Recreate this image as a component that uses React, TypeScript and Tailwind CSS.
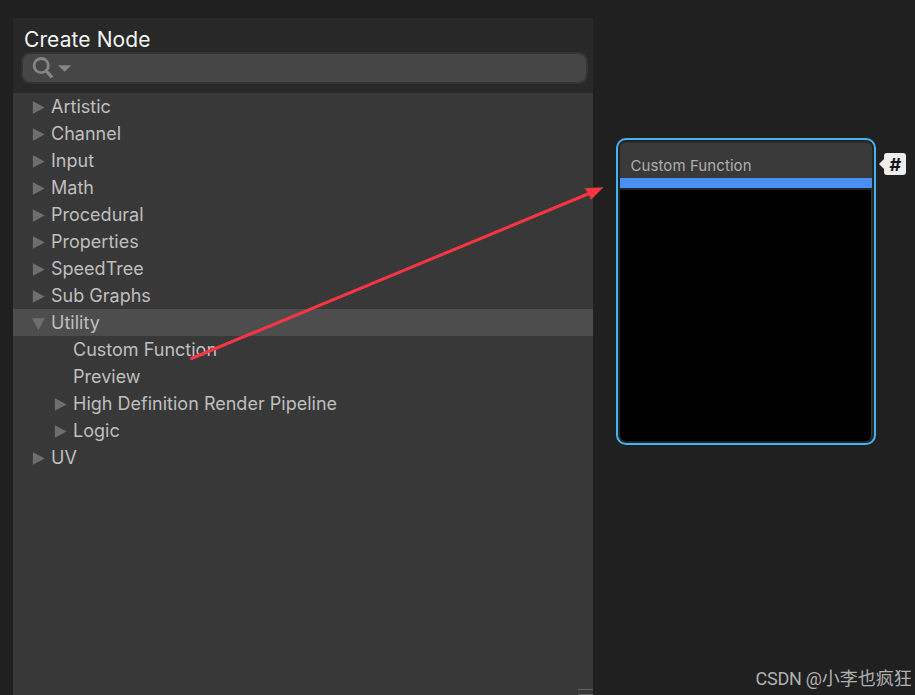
import clsx from "clsx";

interface TreeItem {
  label: string;
  depth: number;
  state: "open" | "closed" | "leaf";
}

const TREE_ITEMS: TreeItem[] = [
  { label: "Artistic", depth: 0, state: "closed" },
  { label: "Channel", depth: 0, state: "closed" },
  { label: "Input", depth: 0, state: "closed" },
  { label: "Math", depth: 0, state: "closed" },
  { label: "Procedural", depth: 0, state: "closed" },
  { label: "Properties", depth: 0, state: "closed" },
  { label: "SpeedTree", depth: 0, state: "closed" },
  { label: "Sub Graphs", depth: 0, state: "closed" },
  { label: "Utility", depth: 0, state: "open" },
  { label: "Custom Function", depth: 1, state: "leaf" },
  { label: "Preview", depth: 1, state: "leaf" },
  { label: "High Definition Render Pipeline", depth: 1, state: "closed" },
  { label: "Logic", depth: 1, state: "closed" },
  { label: "UV", depth: 0, state: "closed" },
];

function Foldout({ state }: { state: TreeItem["state"] }) {
  return (
    <svg className="h-[27px] w-[19px] shrink-0" viewBox="0 0 19 27" fill="#6e6e6e" aria-hidden="true">
      {state === "closed" && <path d="M.9 8.2 12.7 14.5.9 20.8Z" />}
      {state === "open" && <path d="M0 9.2h12.9L6.4 20.9Z" />}
    </svg>
  );
}

function TreeRow({ item }: { item: TreeItem }) {
  return (
    <li
      className={clsx(
        "flex h-[27px]",
        item.depth === 0 ? "pl-[19px]" : "pl-[41px]",
        item.state === "open" && "bg-[#4d4d4d]",
      )}
    >
      <Foldout state={item.state} />
      <span className="text-[18px] leading-[27px] tracking-[0.01px] whitespace-nowrap text-[#bfbfbf]">
        {item.label}
      </span>
    </li>
  );
}

function SearchField() {
  return (
    <div className="mr-[5px] ml-[8px] flex h-[32px] items-center rounded-[9px] border-2 border-[#343434] bg-[#464646]">
      <svg className="h-[28px] w-[52px]" viewBox="0 0 52 28" fill="none" aria-hidden="true">
        <circle cx="18.2" cy="11.6" r="7.1" stroke="#858585" strokeWidth="2.8" />
        <path d="m23.1 16.9 6 6.5" stroke="#858585" strokeWidth="3.2" />
        <path d="M35 11.2h13.2l-6.6 6.6Z" fill="#858585" />
      </svg>
    </div>
  );
}

/** Searchable list of node categories. */
function CreateNodePanel() {
  return (
    <section className="mt-[18px] ml-[13px] flex w-[580px] flex-col bg-[#282828]">
      <h1 className="h-[34px] pt-[7px] pl-[11px] text-[21px] leading-[29px] tracking-[0.1px] text-[#f4f4f4]">
        Create Node
      </h1>
      <SearchField />
      <ul className="mt-[9px] flex-1 bg-[#383838]">
        {TREE_ITEMS.map((item) => (
          <TreeRow key={item.label} item={item} />
        ))}
      </ul>
      <div className="flex justify-end bg-[#383838]">
        <div className="h-[6px] w-[15px] border-y border-[#646464]" />
      </div>
    </section>
  );
}

function NodeCard() {
  return (
    <div className="absolute top-[138px] left-[616px] flex h-[307px] w-[260px] flex-col overflow-hidden rounded-[10px] border-2 border-[#44b4ee] bg-[#242424] p-[2px]">
      <div className="h-[36px] shrink-0 rounded-t-[5px] border-t border-[#303030] bg-[#393939] pt-[12px] pl-[10.5px] text-[15px] leading-[22px] tracking-[0.08px] text-[#aeaeae]">
        Custom Function
      </div>
      <div className="h-[10px] shrink-0 bg-[#4990f2]" />
      <div className="mt-[2px] flex-1 rounded-b-[6px] border-r border-[#393939] bg-black" />
    </div>
  );
}

function PrecisionBadge() {
  return (
    <div className="absolute top-[153px] left-[879px] flex items-center">
      <svg className="h-[10px] w-[5px]" viewBox="0 0 5 10" fill="#eee" aria-hidden="true">
        <path d="M5 0v10L0 5Z" />
      </svg>
      <span className="flex h-[22px] w-[22px] items-center justify-center rounded-[3px] bg-[#eee] text-[18px] font-bold text-[#151515] italic">
        #
      </span>
    </div>
  );
}

export default function App() {
  return (
    <main className="relative flex h-[695px] w-[915px] overflow-hidden bg-[#202020] font-[Inter,'Liberation_Sans',sans-serif]">
      <CreateNodePanel />
      <NodeCard />
      <PrecisionBadge />
      <svg className="absolute inset-0 h-[695px] w-[915px]" viewBox="0 0 915 695" fill="none" aria-hidden="true">
        <path d="M191.5 358.5 589 193.5" stroke="#fc3545" strokeWidth="3" strokeLinecap="round" />
        <path d="M603.5 187.3 591 199.8 588.5 193.7 584.5 188.3Z" fill="#fc3545" />
      </svg>
      <p className="absolute top-[667px] left-[755.5px] font-[Roboto,'Noto_Sans_CJK_SC',sans-serif] text-[18px] leading-[24px] whitespace-nowrap text-[#b0b0b0]">
        <span className="tracking-[-0.25px]">CSDN @</span>小李也疯狂
      </p>
    </main>
  );
}
